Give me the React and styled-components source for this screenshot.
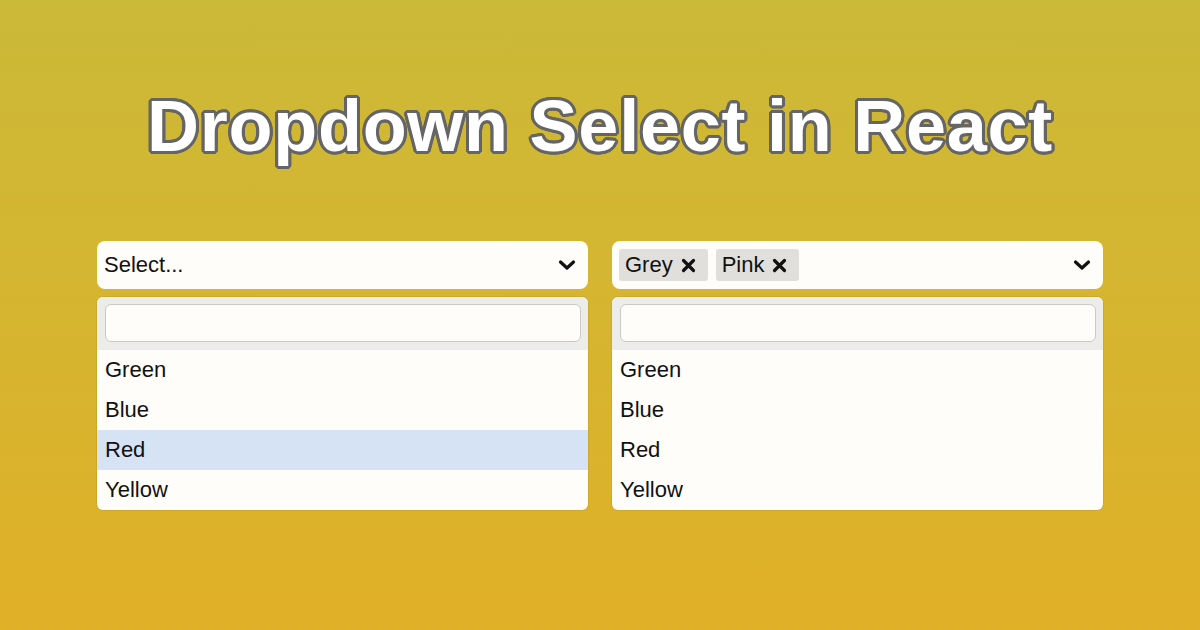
import React from 'react';
import styled, { createGlobalStyle } from 'styled-components';

const GlobalStyle = createGlobalStyle`
  html, body {
    margin: 0;
    padding: 0;
  }
  body {
    width: 1200px;
    height: 630px;
    overflow: hidden;
    font-family: "Liberation Sans", Arial, sans-serif;
  }
`;

const Page = styled.div`
  width: 1200px;
  height: 630px;
  box-sizing: border-box;
  background: linear-gradient(180deg, #cbb938 0%, #d6b530 50%, #e0b027 100%);
  display: flex;
  flex-direction: column;
  align-items: center;
  padding-top: 84px;
`;

const Title = styled.h1`
  margin: 0;
  font-family: "Liberation Sans", Arial, sans-serif;
  font-weight: 700;
  font-size: 72px;
  line-height: 84px;
  letter-spacing: 0.75px;
  color: #ffffff;
  text-shadow:
    3px 0 0 #656565, -3px 0 0 #656565, 0 3px 0 #656565, 0 -3px 0 #656565,
    2px 2px 0 #656565, -2px 2px 0 #656565, 2px -2px 0 #656565, -2px -2px 0 #656565,
    3px 1px 0 #656565, -3px 1px 0 #656565, 3px -1px 0 #656565, -3px -1px 0 #656565,
    1px 3px 0 #656565, -1px 3px 0 #656565, 1px -3px 0 #656565, -1px -3px 0 #656565;
`;

const Row = styled.div`
  margin-top: 73px;
  display: flex;
  gap: 24px;
`;

const Column = styled.div`
  width: 491px;
  display: flex;
  flex-direction: column;
  gap: 8px;
`;

const Control = styled.div`
  height: 48px;
  box-sizing: border-box;
  background: #fefdf9;
  border-radius: 8px;
  display: flex;
  align-items: center;
  padding: 0 12px 0 7px;
  gap: 8px;
`;

const Placeholder = styled.span`
  flex: 1;
  font-size: 22px;
  color: #111;
`;

const Tags = styled.div`
  flex: 1;
  display: flex;
  gap: 8px;
`;

const Tag = styled.span`
  height: 32px;
  display: inline-flex;
  align-items: center;
  gap: 8px;
  padding: 0 12px 0 6px;
  background: #e0dfdb;
  border-radius: 3px;
  font-size: 22px;
  color: #111;
`;

const Chevron = styled.svg`
  width: 18px;
  height: 14px;
  flex-shrink: 0;
`;

const Panel = styled.div`
  background: #fefdf9;
  border-radius: 6px;
  overflow: hidden;
  box-shadow: 0 0 0 1px rgba(0, 0, 0, 0.05);
`;

const SearchArea = styled.div`
  background: #ececea;
  padding: 7px 7px 8px 8px;
`;

const SearchInput = styled.div`
  height: 38px;
  box-sizing: border-box;
  border: 1px solid #c9c9c6;
  border-radius: 6px;
  background: #fefdf9;
`;

const Option = styled.div`
  height: 40px;
  display: flex;
  align-items: center;
  padding-left: 8px;
  font-size: 22px;
  color: #111;
  background: ${(p) => (p.$active ? '#d6e3f5' : 'transparent')};
`;

const ChevronIcon = () => (
  <Chevron viewBox="0 0 18 14">
    <path d="M2.5 4 L9 10 L15.5 4" fill="none" stroke="#111" strokeWidth="3.2" strokeLinecap="round" strokeLinejoin="round" />
  </Chevron>
);

const CloseIcon = () => (
  <svg width="15" height="15" viewBox="0 0 15 15">
    <path d="M2.5 2.5 L12.5 12.5 M12.5 2.5 L2.5 12.5" stroke="#111" strokeWidth="3.2" strokeLinecap="round" />
  </svg>
);

const options = ['Green', 'Blue', 'Red', 'Yellow'];

const Menu = ({ active }) => (
  <Panel>
    <SearchArea>
      <SearchInput />
    </SearchArea>
    {options.map((o) => (
      <Option key={o} $active={o === active}>{o}</Option>
    ))}
  </Panel>
);

const App = () => (
  <Page>
    <GlobalStyle />
    <Title>Dropdown Select in React</Title>
    <Row>
      <Column>
        <Control>
          <Placeholder>Select...</Placeholder>
          <ChevronIcon />
        </Control>
        <Menu active="Red" />
      </Column>
      <Column>
        <Control>
          <Tags>
            <Tag>Grey <CloseIcon /></Tag>
            <Tag>Pink <CloseIcon /></Tag>
          </Tags>
          <ChevronIcon />
        </Control>
        <Menu />
      </Column>
    </Row>
  </Page>
);

export default App;
